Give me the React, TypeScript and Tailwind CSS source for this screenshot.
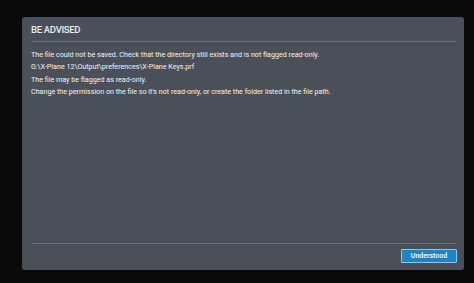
import React from 'react';

export default function App() {
  const lines = [
    'The file could not be saved. Check that the directory still exists and is not flagged read-only.',
    'G:\\X-Plane 12\\Output\\preferences\\X-Plane Keys.prf',
    'The file may be flagged as read-only.',
    "Change the permission on the file so it's not read-only, or create the folder listed in the file path.",
  ];

  return (
    <div
      className="w-[474px] h-[283px] bg-[#0a0a0b] pt-[17px] pl-[22px] pr-[10px] pb-[13px] flex"
      style={{ fontFamily: 'Roboto, "Liberation Sans", sans-serif' }}
    >
      <div className="flex-1 flex flex-col bg-[#4b5058] rounded-[3px] pl-[9px] pr-[7px]">
        {/* Title */}
        <div className="h-[24px] flex items-center pt-[2px]">
          <h1 className="text-[9.5px] font-medium text-[#eceef0] tracking-[-0.3px]">BE ADVISED</h1>
        </div>
        <div className="h-px bg-[#6c7077] mx-[1px]" />

        {/* Message */}
        <div className="pt-[7px] flex flex-col text-[7.15px] leading-[12.3px] text-[#f2f4f6]">
          {lines.map((l) => (
            <p key={l}>{l}</p>
          ))}
        </div>

        <div className="flex-1" />

        {/* Footer */}
        <div className="h-px bg-[#6c7077] mx-[1px]" />
        <div className="flex justify-end pt-[5px] pb-[7px]">
          <button className="w-[56px] h-[14px] bg-[#1c84c2] border border-[#8cc9ec] rounded-[1px] text-white text-[7px] font-medium flex items-center justify-center">
            Understood
          </button>
        </div>
      </div>
    </div>
  );
}
